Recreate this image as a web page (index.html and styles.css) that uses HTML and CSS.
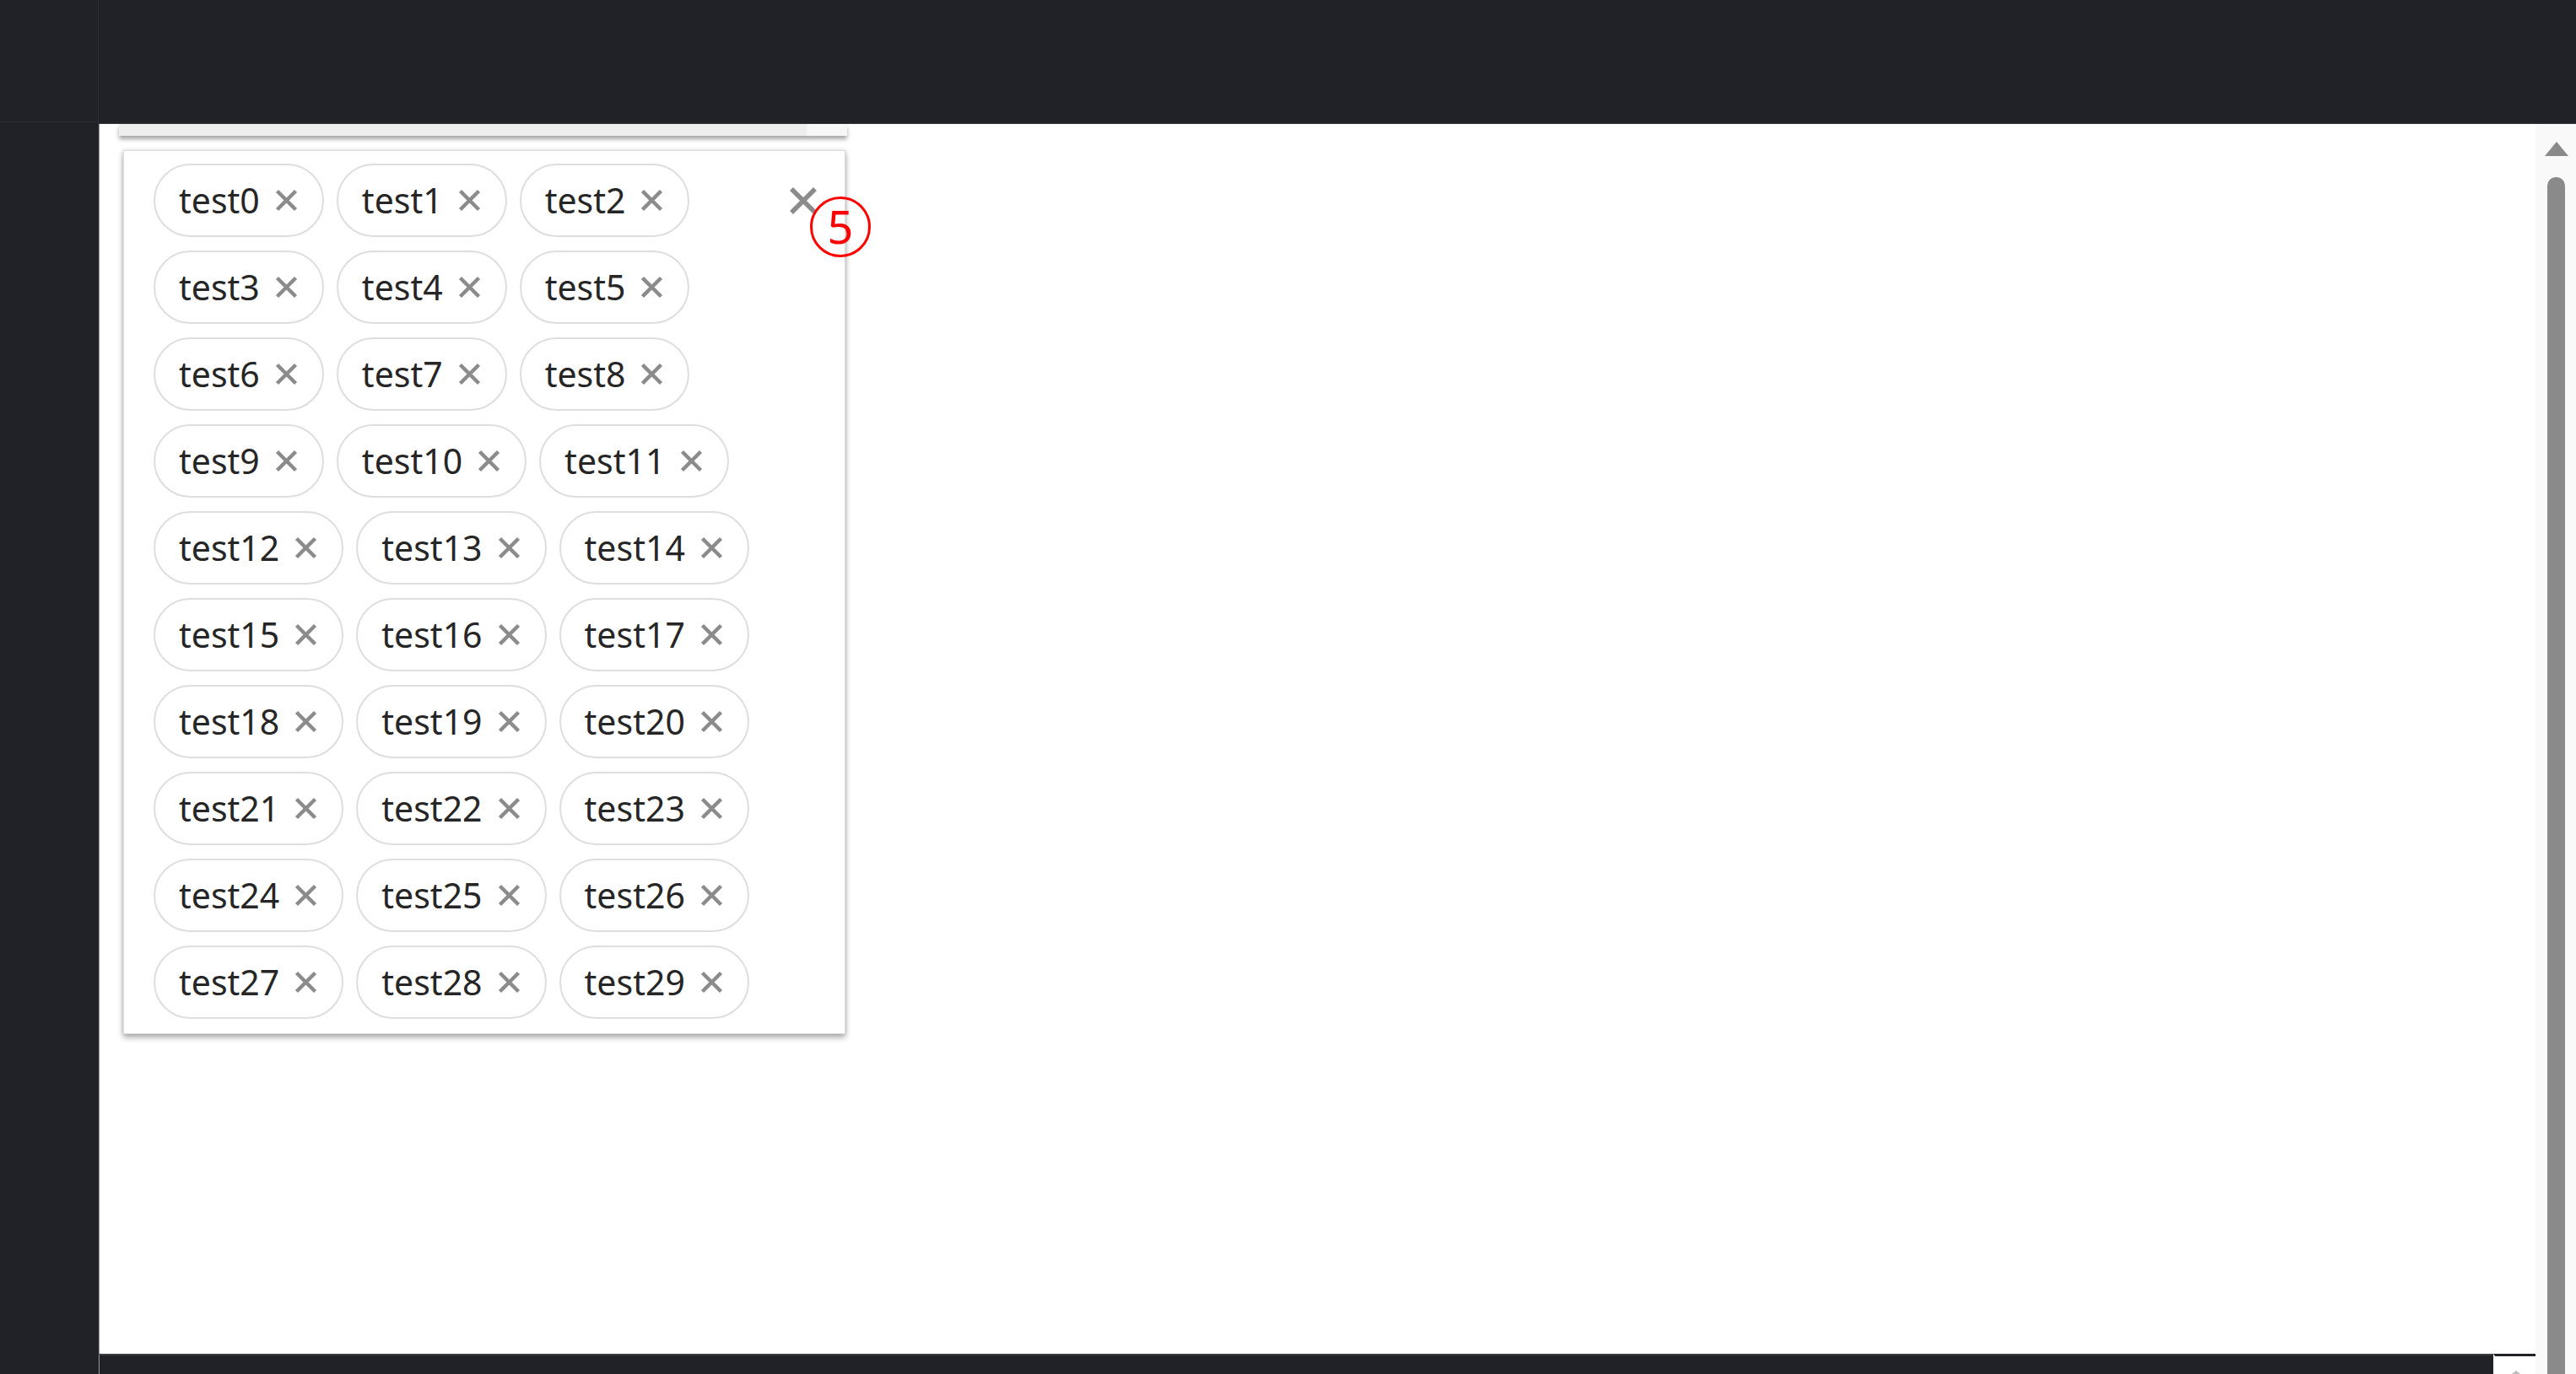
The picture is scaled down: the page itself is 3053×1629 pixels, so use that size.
FILE: index.html
```html
<!DOCTYPE html>
<html lang="en">
<head>
<meta charset="utf-8">
<title>Tag select</title>
<link rel="stylesheet" href="styles.css">
</head>
<body>
<div class="app">
  <aside class="sidebar"><div class="sidebar-top"></div></aside>
  <header class="topbar"></header>
  <main class="canvas">
    <div class="strip"><div class="strip-end"></div></div>
    <div class="panel">
      <ul class="tags" id="tags"></ul>
      <button class="close" type="button" aria-label="Close">
        <svg viewBox="0 0 34 34" width="34" height="34"><path d="M3 3 L31 31 M31 3 L3 31"/></svg>
      </button>
      <div class="marker">5</div>
    </div>
  </main>
  <footer class="footer"><div class="footer-dark"></div><div class="footer-corner"><span class="corner-tip"></span></div></footer>
  <div class="vscroll"><span class="vscroll-up"></span><span class="vscroll-thumb"></span></div>
</div>
<script>
  var ul = document.getElementById('tags');
  var html = '';
  for (var i = 0; i < 30; i++) {
    html += '<li class="tag"><span class="tag-label">test' + i + '</span>' +
      '<svg class="tag-x" viewBox="0 0 27 27" width="27" height="27"><path d="M2.5 2.5 L24.5 24.5 M24.5 2.5 L2.5 24.5"/></svg></li>';
  }
  ul.innerHTML = html;
</script>
</body>
</html>
```

FILE: styles.css
```css
* { box-sizing: border-box; }
html, body { margin: 0; padding: 0; }
body {
  background: #202228;
  font-family: "Noto Sans", "Liberation Sans", sans-serif;
  overflow: hidden;
}
.app {
  display: grid;
  grid-template-columns: 117px 1fr 48px;
  grid-template-rows: 147px 1fr 24px;
  width: 3053px;
  height: 1629px;
}
.sidebar {
  grid-column: 1;
  grid-row: 1 / 4;
  background: #202228;
  border-right: 1px solid #2a2d33;
}
.sidebar-top {
  height: 145px;
  border-bottom: 1px solid #2c2f35;
}
.topbar {
  grid-column: 2 / 4;
  grid-row: 1;
  background: #202228;
  border-bottom: 1px solid #34373d;
}
.canvas {
  grid-column: 2;
  grid-row: 2;
  background: #ffffff;
  position: relative;
  border-left: 1px solid #8e9094;
}
.strip {
  position: absolute;
  left: 23px;
  top: 0;
  width: 863px;
  height: 14px;
  background: #eeeeee;
  box-shadow: 0 4px 5px rgba(0,0,0,0.35);
  display: flex;
  justify-content: flex-end;
}
.strip-end {
  width: 48px;
  height: 100%;
  background: #f7f7f7;
}
.panel {
  position: absolute;
  left: 28px;
  top: 31px;
  width: 856px;
  background: #ffffff;
  border: 1px solid #dcdcdc;
  box-shadow: 0 4px 7px rgba(0,0,0,0.33), 0 0 4px rgba(0,0,0,0.12);
  padding: 15px 32px 17px 35px;
  display: flex;
  align-items: flex-start;
  gap: 15px;
}
.tags {
  list-style: none;
  margin: 0;
  padding: 0;
  flex: 1;
  display: flex;
  flex-wrap: wrap;
  gap: 16px 15px;
}
.tag {
  display: inline-flex;
  align-items: center;
  height: 87px;
  padding: 0 29px 0 28px;
  border: 2px solid #dedede;
  border-radius: 44px;
  gap: 18px;
  color: #262626;
  font-size: 41px;
  line-height: 1;
}
.tag-label { display: block; }
.tag-x {
  display: block;
  flex: none;
}
.tag-x path, .close path {
  fill: none;
  stroke: #8b8b8b;
  stroke-width: 4.5;
}
.close {
  flex: none;
  margin-top: 27px;
  width: 34px;
  height: 34px;
  padding: 0;
  border: 0;
  background: transparent;
}
.close svg { display: block; }
.close path { stroke-width: 5.5; }
.marker {
  position: absolute;
  left: 813px;
  top: 54px;
  width: 72px;
  height: 72px;
  border: 3px solid #ff0000;
  border-radius: 50%;
  color: #ff0000;
  font-family: "Noto Sans", "Liberation Sans", sans-serif;
  font-size: 54px;
  line-height: 64px;
  text-align: center;
  background: transparent;
}
.footer {
  grid-column: 2;
  grid-row: 3;
  display: flex;
}
.footer-dark {
  flex: 1;
  background: #202228;
  border-top: 2px solid #3a3d42;
  border-left: 1px solid #8e9094;
}
.footer-corner {
  width: 50px;
  background: #ffffff;
  border-top: 3px solid #202228;
  border-left: 2px solid #ffffff;
  position: relative;
}
.corner-tip {
  position: absolute;
  left: 20px;
  bottom: 0;
  width: 0;
  height: 0;
  border-left: 5px solid transparent;
  border-right: 5px solid transparent;
  border-bottom: 4px solid #bdbdbd;
}
.vscroll {
  grid-column: 3;
  grid-row: 2 / 4;
  background: #f9f9f9;
  display: flex;
  flex-direction: column;
  align-items: center;
  padding-top: 21px;
  padding-left: 1px;
}
.vscroll-up {
  width: 0;
  height: 0;
  border-left: 14px solid transparent;
  border-right: 14px solid transparent;
  border-bottom: 17px solid #8a8a8a;
}
.vscroll-thumb {
  margin-top: 25px;
  width: 21px;
  flex: 1;
  background: #8a8a8a;
  border-radius: 10px 10px 0 0;
  margin-bottom: -20px;
}
```
